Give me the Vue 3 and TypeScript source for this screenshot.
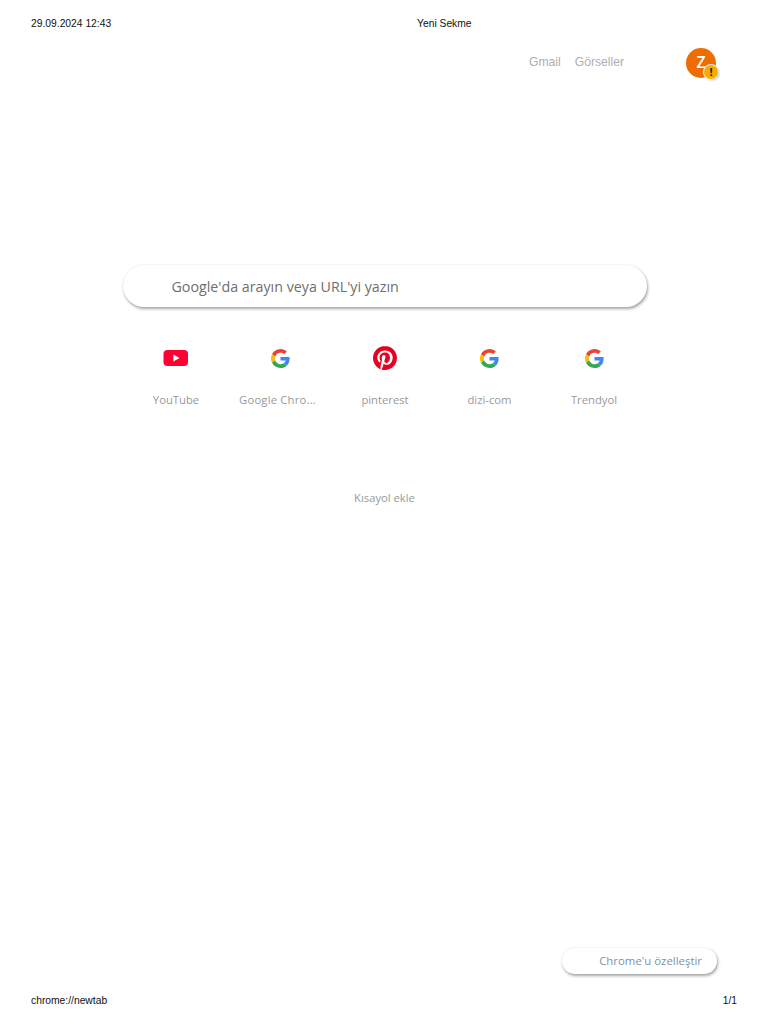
<template>
  <div class="page">
    <header class="print-head">
      <span class="print-date">29.09.2024 12:43</span>
      <span>Yeni Sekme</span>
    </header>

    <nav class="top-nav">
      <a href="#" class="top-link">Gmail</a>
      <a href="#" class="top-link">Görseller</a>
      <div class="avatar">
        Z
        <span class="avatar__badge">!</span>
      </div>
    </nav>

    <main class="main">
      <div class="search">Google'da arayın veya URL'yi yazın</div>

      <div class="shortcuts">
        <a v-for="item in shortcuts" :key="item.name" href="#" class="shortcut">
          <span class="shortcut__icon">
            <svg v-if="item.icon === 'youtube'" width="26" height="18" viewBox="0 0 26 18">
              <rect x="0.5" y="1" width="24.5" height="16" rx="4" fill="#ff0033" />
              <path d="M10.3 5.6 L16.6 9 L10.3 12.4 Z" fill="#fff" />
            </svg>
            <svg v-else-if="item.icon === 'pinterest'" width="24" height="24" viewBox="0 0 24 24">
              <path
                d="M12.017 0C5.396 0 .029 5.367.029 11.987c0 5.079 3.158 9.417 7.618 11.162-.105-.949-.199-2.403.041-3.439.219-.937 1.406-5.957 1.406-5.957s-.359-.72-.359-1.781c0-1.663.967-2.911 2.168-2.911 1.024 0 1.518.769 1.518 1.688 0 1.029-.653 2.567-.992 3.992-.285 1.193.6 2.165 1.775 2.165 2.128 0 3.768-2.245 3.768-5.487 0-2.861-2.063-4.869-5.008-4.869-3.41 0-5.409 2.562-5.409 5.199 0 1.033.394 2.143.889 2.741.099.12.112.225.085.345-.09.375-.293 1.199-.334 1.363-.053.225-.172.271-.401.165-1.495-.69-2.433-2.878-2.433-4.646 0-3.776 2.748-7.252 7.92-7.252 4.158 0 7.392 2.967 7.392 6.923 0 4.135-2.607 7.462-6.233 7.462-1.214 0-2.354-.629-2.758-1.379l-.749 2.848c-.269 1.045-1.004 2.352-1.498 3.146 1.123.345 2.306.535 3.55.535 6.607 0 11.985-5.365 11.985-11.987C23.97 5.39 18.592.026 11.985.026L12.017 0z"
                fill="#e60023"
              />
            </svg>
            <svg v-else width="19" height="19" viewBox="0 0 48 48">
              <path fill="#EA4335" d="M24 9.5c3.54 0 6.71 1.22 9.21 3.6l6.85-6.85C35.9 2.38 30.47 0 24 0 14.62 0 6.51 5.38 2.56 13.22l7.98 6.19C12.43 13.72 17.74 9.5 24 9.5z" />
              <path fill="#4285F4" d="M46.98 24.55c0-1.57-.15-3.09-.38-4.55H24v9.02h12.94c-.58 2.96-2.26 5.48-4.78 7.18l7.73 6c4.51-4.18 7.09-10.36 7.09-17.65z" />
              <path fill="#FBBC05" d="M10.53 28.59c-.48-1.45-.76-2.99-.76-4.59s.27-3.14.76-4.59l-7.98-6.19C.92 16.46 0 20.12 0 24c0 3.88.92 7.54 2.56 10.78l7.97-6.19z" />
              <path fill="#34A853" d="M24 48c6.48 0 11.93-2.13 15.89-5.81l-7.73-6c-2.15 1.45-4.92 2.3-8.16 2.3-6.26 0-11.57-4.22-13.47-9.91l-7.98 6.19C6.51 42.62 14.62 48 24 48z" />
            </svg>
          </span>
          <span class="shortcut__name" :class="{ 'shortcut__name--cut': item.name.endsWith('...') }">{{ item.name }}</span>
        </a>
      </div>

      <a href="#" class="add-shortcut">Kısayol ekle</a>
    </main>

    <div class="customize-row">
      <button class="customize" type="button">Chrome'u özelleştir</button>
    </div>

    <footer class="print-foot">
      <span>chrome://newtab</span>
      <span>1/1</span>
    </footer>
  </div>
</template>

<script setup lang="ts">
const shortcuts = [
  { name: "YouTube", icon: "youtube" },
  { name: "Google Chro...", icon: "google" },
  { name: "pinterest", icon: "pinterest" },
  { name: "dizi-com", icon: "google" },
  { name: "Trendyol", icon: "google" },
];
</script>

<style>
html,
body {
  background: #fff;
}
</style>

<style scoped>
.page {
  height: 1024px;
  display: flex;
  flex-direction: column;
  background: #fff;
  font-family: "Open Sans", "Noto Sans", sans-serif;
  overflow: hidden;
}

.print-head,
.print-foot {
  font-family: "Liberation Sans", Arial, sans-serif;
  font-size: 10.3px;
  line-height: 12px;
  color: #111;
  padding: 0 31px;
}

.print-head {
  display: flex;
  padding-top: 18px;
}

.print-date {
  width: 386px;
}

.top-nav {
  display: flex;
  align-items: center;
  height: 30px;
  margin-top: 18px;
  padding-right: 52px;
  justify-content: flex-end;
}

.top-link {
  font-family: "Liberation Sans", Arial, sans-serif;
  font-size: 12.15px;
  color: #aeaeae;
  text-decoration: none;
  margin-right: 14px;
  padding-bottom: 2px;
}

.top-link + .top-link {
  margin-right: 62px;
}

.avatar {
  position: relative;
  width: 30px;
  height: 30px;
  border-radius: 50%;
  background: #ef6c00;
  color: #fff;
  font-size: 16px;
  font-weight: 600;
  line-height: 29px;
  text-align: center;
}

.avatar__badge {
  position: absolute;
  right: -2px;
  bottom: -1px;
  width: 14px;
  height: 14px;
  border-radius: 50%;
  background: #f9ab00;
  color: #222;
  font-size: 11px;
  font-weight: 700;
  line-height: 14px;
  text-align: center;
  box-shadow: 0 0 0 1px #eee, 1px 1px 2px rgba(60, 64, 67, 0.5);
}

.main {
  display: flex;
  flex-direction: column;
  align-items: center;
  margin-top: 187px;
  padding-left: 1px;
}

.search {
  width: 524px;
  height: 42px;
  box-sizing: border-box;
  padding-left: 49px;
  border-radius: 21px;
  background: #fff;
  box-shadow: 1px 2px 3px rgba(60, 64, 67, 0.45), 0 0 2px rgba(60, 64, 67, 0.12);
  color: #6f6f6f;
  font-size: 14.25px;
  line-height: 43px;
}

.shortcuts {
  display: flex;
  margin-top: 36px;
  margin-left: 1px;
}

.shortcut {
  width: 104.5px;
  display: flex;
  flex-direction: column;
  align-items: center;
  text-decoration: none;
}

.shortcut__icon {
  height: 30px;
  display: flex;
  align-items: center;
  justify-content: center;
}

.shortcut__name {
  margin-top: 19px;
  color: #999;
  font-size: 11.25px;
  line-height: 16px;
}

.shortcut__name--cut {
  padding-right: 6px;
  letter-spacing: 0.2px;
}

.add-shortcut {
  margin-top: 82px;
  color: #999;
  font-size: 11.25px;
  line-height: 16px;
  text-decoration: none;
}

.customize-row {
  display: flex;
  justify-content: flex-end;
  margin-top: auto;
  padding-right: 51px;
}

.customize {
  width: 155px;
  height: 26px;
  padding: 0 15px 2px 0;
  border: none;
  border-radius: 13px;
  background: #fff;
  box-shadow: 1px 2px 3px rgba(60, 64, 67, 0.45), 0 0 2px rgba(60, 64, 67, 0.12);
  color: #7d93a8;
  font-family: inherit;
  font-size: 11.4px;
  text-align: right;
}

.print-foot {
  display: flex;
  justify-content: space-between;
  margin-top: 21px;
  padding-bottom: 17px;
}
</style>
